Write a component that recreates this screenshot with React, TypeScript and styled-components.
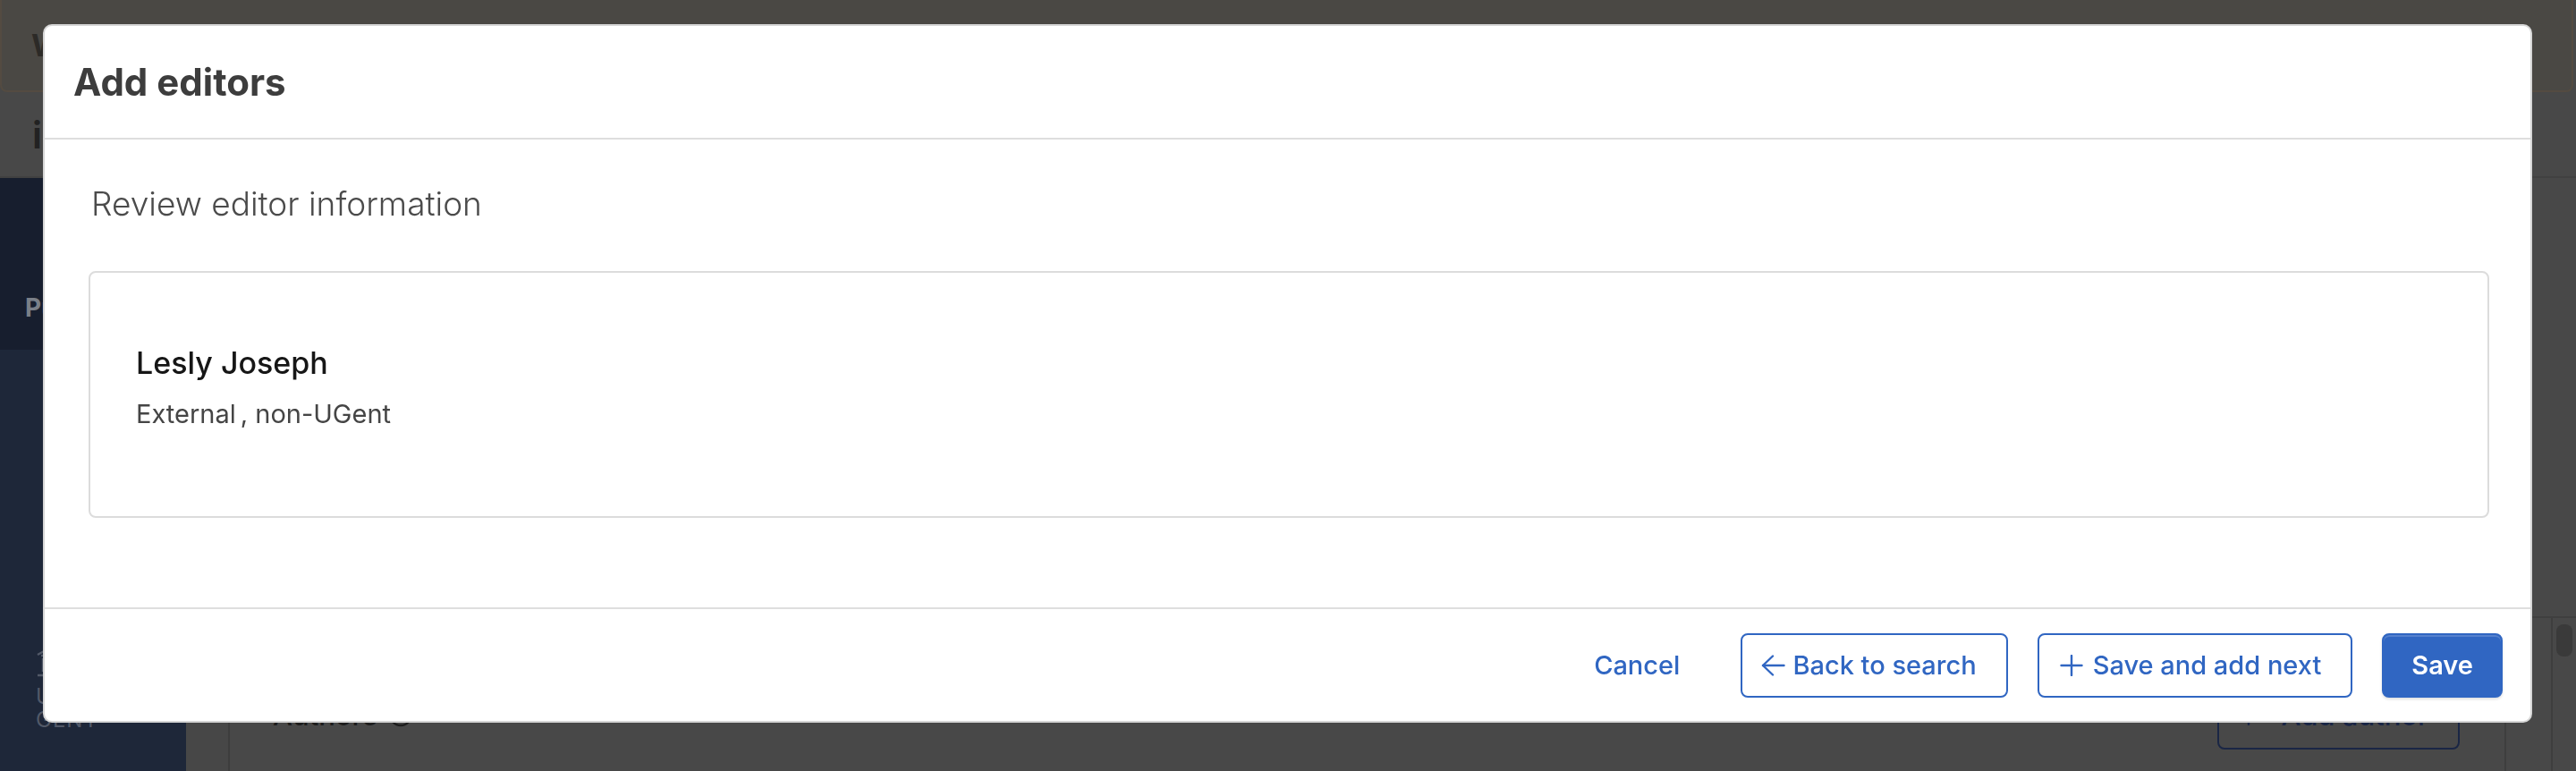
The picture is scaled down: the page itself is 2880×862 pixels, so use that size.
import React from "react";
import styled, { createGlobalStyle } from "styled-components";

const BLUE = "#3066c2";

const GlobalStyle = createGlobalStyle`
  html, body { margin: 0; padding: 0; }
  body {
    width: 2880px;
    height: 862px;
    overflow: hidden;
    background: #484848;
    font-family: Inter, "Liberation Sans", Arial, sans-serif;
  }
  *, *::before, *::after { box-sizing: border-box; }
`;

/* ---------- underlying (dimmed) page ---------- */

const Page = styled.div`
  display: grid;
  grid-template-rows: 103px 96px 1fr;
  width: 2880px;
  height: 862px;
`;

const TopBar = styled.div`
  display: flex;
  align-items: center;
  margin-right: 3px;
  padding-left: 33px;
  background: #4a4844;
  border: 2px solid #544b41;
  border-top: 0;
  border-radius: 0 0 8px 8px;
  font-size: 34px;
  font-weight: 700;
  color: #2c2a27;
`;

const SubBar = styled.div`
  display: flex;
  align-items: center;
  padding-left: 36px;
  background: #484848;
  border-bottom: 2px solid #414141;
  font-size: 42px;
  font-weight: 600;
  color: #222222;
`;

const Main = styled.div`
  display: grid;
  grid-template-columns: 208px 1fr;
  min-height: 0;
`;

const Sidebar = styled.nav`
  display: flex;
  flex-direction: column;
  background: #1e2739;
`;

const SideActive = styled.div`
  height: 192px;
  display: flex;
  align-items: flex-end;
  padding: 0 0 30px 28px;
  background: #171e2e;
  font-size: 28px;
  font-weight: 700;
  color: #7a7f88;
  white-space: nowrap;
  overflow: hidden;
`;

const Logo = styled.div`
  margin-top: auto;
  padding: 0 0 44px 40px;
  display: flex;
  flex-direction: column;
  color: #525968;
  font-size: 24px;
  font-weight: 400;
  letter-spacing: 1px;
  line-height: 26px;
  svg {
    margin-bottom: 8px;
  }
`;

const Content = styled.div`
  display: grid;
  grid-template-columns: 49px 1fr;
`;

const Gutter = styled.div`
  background: #474747;
  border-right: 2px solid #3d3d3d;
`;

const Pane = styled.div`
  display: grid;
  grid-template-rows: 492px 1fr;
`;

const PaneTop = styled.div`
  border-bottom: 2px solid #3f3f3f;
`;

const PaneBottom = styled.div`
  display: flex;
`;

const ScrollArea = styled.div`
  flex: 1;
  padding: 69px 50px 0 48px;
`;

const AuthorsRow = styled.div`
  display: flex;
  justify-content: space-between;
  align-items: center;
  height: 78px;
`;

const SectionTitle = styled.h3`
  margin: 0;
  display: flex;
  align-items: center;
  gap: 12px;
  font-size: 31px;
  font-weight: 500;
  color: #1d1d1d;
`;

const Rail = styled.div`
  width: 52px;
  border-left: 2px solid #3e3e3e;
`;

const Track = styled.div`
  width: 28px;
  border-left: 2px solid #3e3e3e;
  padding: 7px 4px 0 4px;
`;

const Thumb = styled.div`
  height: 36px;
  border-radius: 8px;
  background: #3a3a3a;
`;

/* ---------- modal ---------- */

const Overlay = styled.div`
  position: fixed;
  inset: 0;
  display: flex;
  padding: 27px 49px 54px 48px;
`;

const Modal = styled.div`
  flex: 1;
  display: flex;
  flex-direction: column;
  background: #ffffff;
  border: 2px solid #d6d6d6;
  border-radius: 10px;
  overflow: hidden;
`;

const Header = styled.div`
  height: 127px;
  flex: none;
  display: flex;
  align-items: center;
  padding-left: 32px;
  border-bottom: 2px solid #dedede;
`;

const Title = styled.h2`
  margin: 0;
  font-size: 42px;
  font-weight: 700;
  color: #3d3d3d;
`;

const Body = styled.div`
  flex: 1;
  padding: 45px 46px 0 49px;
`;

const Lead = styled.p`
  margin: 0 0 48px;
  padding-left: 3px;
  font-size: 37px;
  line-height: 54px;
  font-weight: 300;
  color: #4b4b4b;
`;

const Card = styled.div`
  height: 276px;
  border: 2px solid #dcdcdc;
  border-radius: 8px;
  padding: 75px 48px 0 51px;
`;

const Name = styled.div`
  font-size: 34px;
  line-height: 51px;
  font-weight: 500;
  color: #161616;
`;

const Meta = styled.div`
  margin-top: 11px;
  font-size: 29px;
  line-height: 42px;
  color: #454545;
`;

const Comma = styled.span`
  margin-left: 5px;
`;

const Footer = styled.div`
  height: 127px;
  flex: none;
  display: flex;
  justify-content: flex-end;
  align-items: center;
  gap: 33px;
  padding-right: 31px;
  border-top: 2px solid #dedede;
`;

type Variant = "link" | "outline" | "solid" | "dark";

const Button = styled.button<{
  $variant: Variant;
  $padLeft?: number;
  $padRight?: number;
  $gap?: number;
  $height?: number;
}>`
  height: ${(p) => p.$height ?? 72}px;
  display: inline-flex;
  align-items: center;
  gap: ${(p) => p.$gap ?? 8}px;
  padding: 0 ${(p) => p.$padRight ?? 33}px 0 ${(p) => p.$padLeft ?? 33}px;
  border-radius: 8px;
  border: 2px solid
    ${(p) => (p.$variant === "link" ? "transparent" : p.$variant === "dark" ? "#1a2645" : BLUE)};
  background: ${(p) =>
    p.$variant === "solid" ? BLUE : p.$variant === "dark" ? "transparent" : "#ffffff"};
  color: ${(p) =>
    p.$variant === "solid" ? "#ffffff" : p.$variant === "dark" ? "#1a2645" : BLUE};
  font-family: inherit;
  font-size: ${(p) => (p.$variant === "dark" ? 31 : 29)}px;
  font-weight: ${(p) => (p.$variant === "solid" ? 600 : 500)};
  white-space: nowrap;
  cursor: pointer;
  box-shadow: ${(p) =>
    p.$variant === "solid"
      ? "inset 0 2px 0 rgba(255,255,255,0.18), 0 2px 3px rgba(0,0,0,0.12)"
      : "none"};
`;

const ArrowLeftIcon = () => (
  <svg
    width="28"
    height="24"
    viewBox="0 0 28 24"
    fill="none"
    stroke="currentColor"
    strokeWidth="2.4"
    strokeLinecap="round"
    strokeLinejoin="round"
  >
    <path d="M26.5 12H3" />
    <path d="M14 1.5 3 12l11 10.5" />
  </svg>
);

const PlusIcon = () => (
  <svg
    width="32"
    height="24"
    viewBox="0 0 32 24"
    fill="none"
    stroke="currentColor"
    strokeWidth="2.4"
    strokeLinecap="round"
  >
    <path d="M16 1v22" />
    <path d="M4.5 12h23" />
  </svg>
);

const InfoIcon = () => (
  <svg
    width="28"
    height="28"
    viewBox="0 0 28 28"
    fill="none"
    stroke="currentColor"
    strokeWidth="2.4"
    strokeLinecap="round"
  >
    <circle cx="14" cy="14" r="12" />
    <path d="M14 12.5v7" />
    <path d="M14 8.5v.2" />
  </svg>
);

const BuildingIcon = () => (
  <svg width="40" height="38" viewBox="0 0 40 38" fill="none" stroke="currentColor" strokeWidth="2.4">
    <path d="M2 12 20 2l18 10" />
    <path d="M6 13h28" />
    <path d="M8 16v15M14 16v15M20 16v15M26 16v15M32 16v15" />
    <path d="M2 35h36" />
  </svg>
);

export default function App() {
  return (
    <>
      <GlobalStyle />
      <Page>
        <TopBar>W</TopBar>
        <SubBar>i</SubBar>
        <Main>
          <Sidebar>
            <SideActive>Publications</SideActive>
            <Logo>
              <BuildingIcon />
              <span>UNIVERSITEIT</span>
              <span>GENT</span>
            </Logo>
          </Sidebar>
          <Content>
            <Gutter />
            <Pane>
              <PaneTop />
              <PaneBottom>
                <ScrollArea>
                  <AuthorsRow>
                    <SectionTitle>
                      Authors
                      <InfoIcon />
                    </SectionTitle>
                    <Button $variant="dark" $padLeft={17} $gap={20} $height={78}>
                      <PlusIcon />
                      Add author
                    </Button>
                  </AuthorsRow>
                </ScrollArea>
                <Rail />
                <Track>
                  <Thumb />
                </Track>
              </PaneBottom>
            </Pane>
          </Content>
        </Main>
      </Page>

      <Overlay>
        <Modal>
          <Header>
            <Title>Add editors</Title>
          </Header>
          <Body>
            <Lead>Review editor information</Lead>
            <Card>
              <Name>Lesly Joseph</Name>
              <Meta>
                External<Comma>,</Comma> non-UGent
              </Meta>
            </Card>
          </Body>
          <Footer>
            <Button $variant="link">Cancel</Button>
            <Button $variant="outline" $padLeft={20}>
              <ArrowLeftIcon />
              Back to search
            </Button>
            <Button $variant="outline" $padLeft={20}>
              <PlusIcon />
              Save and add next
            </Button>
            <Button $variant="solid" $padLeft={31} $padRight={31}>
              Save
            </Button>
          </Footer>
        </Modal>
      </Overlay>
    </>
  );
}
